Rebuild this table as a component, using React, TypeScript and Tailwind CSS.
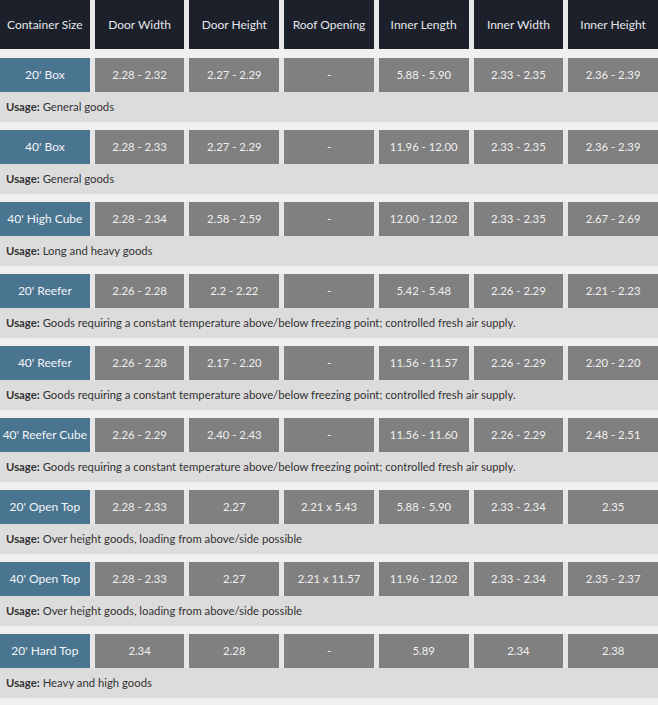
import React from "react";

const HEADERS = [
  "Container Size",
  "Door Width",
  "Door Height",
  "Roof Opening",
  "Inner Length",
  "Inner Width",
  "Inner Height",
];

const ROWS: { name: string; values: string[]; usage: string }[] = [
  { name: "20' Box", values: ["2.28 - 2.32", "2.27 - 2.29", "-", "5.88 - 5.90", "2.33 - 2.35", "2.36 - 2.39"], usage: "General goods" },
  { name: "40' Box", values: ["2.28 - 2.33", "2.27 - 2.29", "-", "11.96 - 12.00", "2.33 - 2.35", "2.36 - 2.39"], usage: "General goods" },
  { name: "40' High Cube", values: ["2.28 - 2.34", "2.58 - 2.59", "-", "12.00 - 12.02", "2.33 - 2.35", "2.67 - 2.69"], usage: "Long and heavy goods" },
  { name: "20' Reefer", values: ["2.26 - 2.28", "2.2 - 2.22", "-", "5.42 - 5.48", "2.26 - 2.29", "2.21 - 2.23"], usage: "Goods requiring a constant temperature above/below freezing point; controlled fresh air supply." },
  { name: "40' Reefer", values: ["2.26 - 2.28", "2.17 - 2.20", "-", "11.56 - 11.57", "2.26 - 2.29", "2.20 - 2.20"], usage: "Goods requiring a constant temperature above/below freezing point; controlled fresh air supply." },
  { name: "40' Reefer Cube", values: ["2.26 - 2.29", "2.40 - 2.43", "-", "11.56 - 11.60", "2.26 - 2.29", "2.48 - 2.51"], usage: "Goods requiring a constant temperature above/below freezing point; controlled fresh air supply." },
  { name: "20' Open Top", values: ["2.28 - 2.33", "2.27", "2.21 x 5.43", "5.88 - 5.90", "2.33 - 2.34", "2.35"], usage: "Over height goods, loading from above/side possible" },
  { name: "40' Open Top", values: ["2.28 - 2.33", "2.27", "2.21 x 11.57", "11.96 - 12.02", "2.33 - 2.34", "2.35 - 2.37"], usage: "Over height goods, loading from above/side possible" },
  { name: "20' Hard Top", values: ["2.34", "2.28", "-", "5.89", "2.34", "2.38"], usage: "Heavy and high goods" },
];

export default function App() {
  return (
    <div className="min-h-[705px] w-[658px] bg-[#f0f0f0] font-['Lato','Open_Sans',sans-serif] text-[11.3px]">
      <div className="grid grid-cols-7 gap-x-[5px] bg-[#e8e8e8]">
        {HEADERS.map((h) => (
          <div key={h} className="flex h-[49px] items-center justify-center bg-[#1c202b] text-[12px] text-[#e4e6ea]">
            {h}
          </div>
        ))}
      </div>

      <div className="flex flex-col gap-[8px] pt-[9px]">
        {ROWS.map((row) => (
          <div key={row.name} className="bg-[#dcdcdc]">
            <div className="grid grid-cols-7 gap-x-[5px] bg-[#e6e6e6]">
              <div className="flex h-[34px] items-center justify-center bg-[#4a7590] text-[12px] text-[#f2f4f6]">{row.name}</div>
              {row.values.map((v, i) => (
                <div key={i} className="flex h-[34px] items-center justify-center bg-[#808080] text-[#f0f0f0]">
                  {v}
                </div>
              ))}
            </div>
            <div className="flex h-[30px] items-center px-[6px] text-[#333]">
              <span className="font-bold">Usage:</span>
              <span className="ml-[3px]">{row.usage}</span>
            </div>
          </div>
        ))}
      </div>
    </div>
  );
}
